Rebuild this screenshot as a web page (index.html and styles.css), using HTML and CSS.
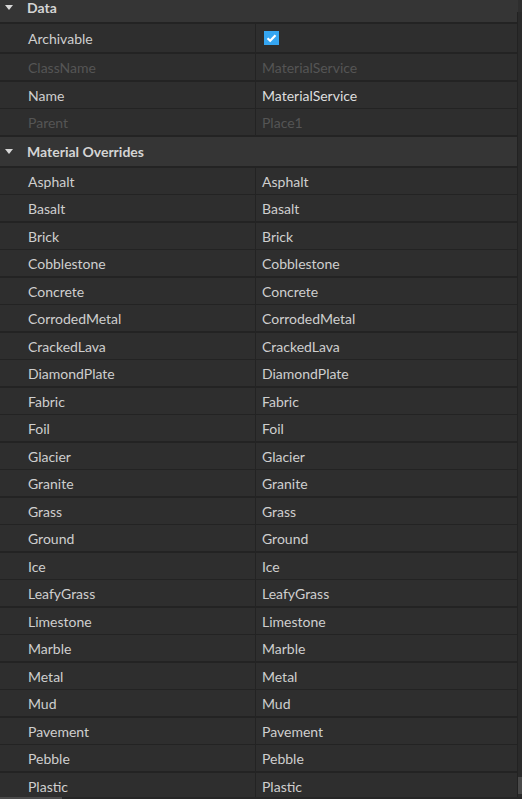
FILE: index.html
```html
<!DOCTYPE html>
<html>
<head>
<meta charset="utf-8">
<link rel="stylesheet" href="styles.css">
</head>
<body>
<div class="panel">
  <div class="content">
    <div class="section-head first"><span class="caret"></span><span class="title">Data</span></div>
    <div class="row tall"><div class="name">Archivable</div><div class="value"><span class="check"><svg width="15" height="14" viewBox="0 0 15 14"><rect width="15" height="14" fill="#35a6f2"/><path d="M3.5 7.2 L6.2 9.8 L11.5 4.3" fill="none" stroke="#fff" stroke-width="2.2"/></svg></span></div></div>
    <div class="row r28 dis"><div class="name">ClassName</div><div class="value">MaterialService</div></div>
    <div class="row r27"><div class="name">Name</div><div class="value bright">MaterialService</div></div>
    <div class="row r28 dis"><div class="name">Parent</div><div class="value">Place1</div></div>
    <div class="section-head"><span class="caret"></span><span class="title">Material Overrides</span></div>
    <div class="list">
      <div class="row"><div class="name">Asphalt</div><div class="value">Asphalt</div></div>
      <div class="row"><div class="name">Basalt</div><div class="value">Basalt</div></div>
      <div class="row"><div class="name">Brick</div><div class="value">Brick</div></div>
      <div class="row"><div class="name">Cobblestone</div><div class="value">Cobblestone</div></div>
      <div class="row"><div class="name">Concrete</div><div class="value">Concrete</div></div>
      <div class="row"><div class="name">CorrodedMetal</div><div class="value">CorrodedMetal</div></div>
      <div class="row"><div class="name">CrackedLava</div><div class="value">CrackedLava</div></div>
      <div class="row"><div class="name">DiamondPlate</div><div class="value">DiamondPlate</div></div>
      <div class="row"><div class="name">Fabric</div><div class="value">Fabric</div></div>
      <div class="row"><div class="name">Foil</div><div class="value">Foil</div></div>
      <div class="row"><div class="name">Glacier</div><div class="value">Glacier</div></div>
      <div class="row"><div class="name">Granite</div><div class="value">Granite</div></div>
      <div class="row"><div class="name">Grass</div><div class="value">Grass</div></div>
      <div class="row"><div class="name">Ground</div><div class="value">Ground</div></div>
      <div class="row"><div class="name">Ice</div><div class="value">Ice</div></div>
      <div class="row"><div class="name">LeafyGrass</div><div class="value">LeafyGrass</div></div>
      <div class="row"><div class="name">Limestone</div><div class="value">Limestone</div></div>
      <div class="row"><div class="name">Marble</div><div class="value">Marble</div></div>
      <div class="row"><div class="name">Metal</div><div class="value">Metal</div></div>
      <div class="row"><div class="name">Mud</div><div class="value">Mud</div></div>
      <div class="row"><div class="name">Pavement</div><div class="value">Pavement</div></div>
      <div class="row"><div class="name">Pebble</div><div class="value">Pebble</div></div>
      <div class="row last"><div class="name">Plastic</div><div class="value">Plastic</div></div>
    </div>
  </div>
  <div class="vscroll"><div class="vthumb"></div></div>
  <div class="hscroll"><div class="hthumb"></div></div>
</div>
</body>
</html>
```
FILE: styles.css
```css
html, body {
  margin: 0;
  padding: 0;
  background: #2e2e2e;
  overflow: hidden;
}
.panel {
  position: relative;
  width: 522px;
  height: 799px;
  overflow: hidden;
  background: #2e2e2e;
  font-family: Lato, "Open Sans", sans-serif;
  font-size: 14px;
  color: #cfcfcf;
}
.content {
  width: 518px;
  height: 797px;
  overflow: hidden;
  display: flex;
  flex-direction: column;
}
.section-head {
  flex: none;
  display: flex;
  align-items: center;
  height: 29px;
  background: #353535;
  border-bottom: 2px solid #232323;
}
.section-head.first {
  height: 22px;
  align-items: flex-start;
}
.section-head.first .caret { margin-top: 5px; }
.section-head.first .title { line-height: 16px; }
.caret {
  width: 0;
  height: 0;
  margin-left: 5px;
  border-left: 4.5px solid transparent;
  border-right: 4.5px solid transparent;
  border-top: 5px solid #d8d8d8;
}
.title {
  margin-left: 14px;
  font-weight: bold;
  color: #d4d4d4;
}
.list {
  display: flex;
  flex-direction: column;
}
.row {
  flex: none;
  display: grid;
  grid-template-columns: 256px 1fr;
  align-items: stretch;
  box-sizing: border-box;
  height: 27px;
  border-bottom: 1px solid #232323;
}
.list .row:nth-child(even) {
  height: 28px;
  border-bottom-width: 2px;
}
.list .row.last {
  height: 26px;
  border-bottom: none;
}
.row.tall { height: 30px; border-bottom-width: 2px; }
.row.r28 { height: 28px; border-bottom-width: 2px; }
.row.r27 { height: 27px; border-bottom-width: 1px; }
.name {
  display: flex;
  align-items: center;
  padding-left: 28px;
  border-right: 1px solid #232323;
}
.value {
  display: flex;
  align-items: center;
  padding-left: 6px;
}
.bright { color: #dedede; }
.dis .name, .dis .value { color: #555555; }
.check {
  display: flex;
  margin-left: 2px;
}
.vscroll {
  position: absolute;
  right: 0;
  top: 12px;
  width: 4px;
  height: 785px;
  background: #2a2a2a;
  border-left: 1px solid #222;
}
.vthumb {
  position: absolute;
  left: 0;
  bottom: 3px;
  width: 4px;
  height: 17px;
  background: #4a4a4a;
}
.hscroll {
  position: absolute;
  left: 0;
  bottom: 0;
  width: 522px;
  height: 2px;
  background: #262626;
}
.hthumb {
  width: 62px;
  height: 2px;
  background: #4a4a4a;
}
```
